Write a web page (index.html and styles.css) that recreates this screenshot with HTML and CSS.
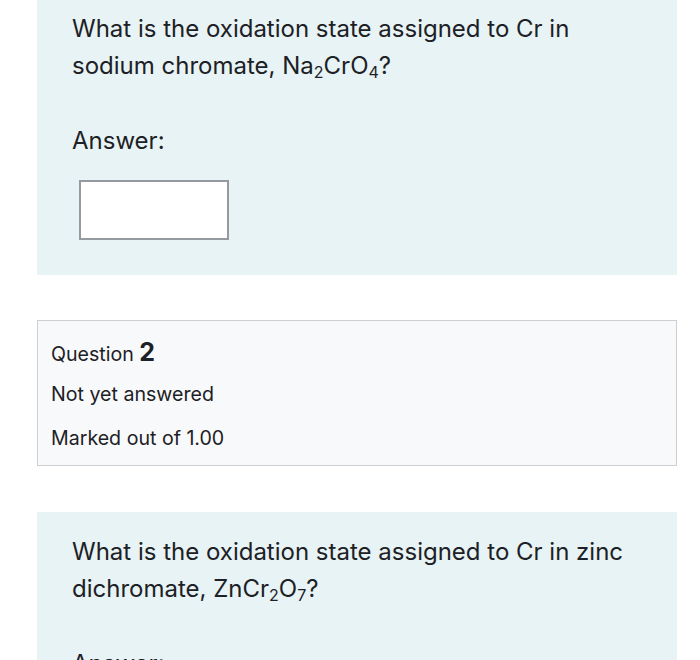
FILE: index.html
```html
<!DOCTYPE html>
<html>
<head>
<meta charset="utf-8">
<link rel="stylesheet" href="styles.css">
</head>
<body>
<div class="page">
  <div class="formulation first">
    <p class="qtext">What is the oxidation state assigned to Cr in sodium chromate, Na<sub>2</sub>CrO<sub>4</sub>?</p>
    <div class="answer-label">Answer:</div>
    <div class="answer-input"></div>
  </div>

  <div class="info">
    <h3 class="qno">Question <span class="num">2</span></h3>
    <div class="state">Not yet answered</div>
    <div class="grade">Marked out of 1.00</div>
  </div>

  <div class="formulation second">
    <p class="qtext">What is the oxidation state assigned to Cr in zinc dichromate, ZnCr<sub>2</sub>O<sub>7</sub>?</p>
    <div class="answer-label">Answer:</div>
    <div class="answer-input"></div>
  </div>
</div>
</body>
</html>
```

FILE: styles.css
```css
html, body {
  margin: 0;
  padding: 0;
  background: #ffffff;
}

body {
  font-family: Inter, "Liberation Sans", Arial, sans-serif;
  color: #1d2125;
  height: 660px;
  overflow: hidden;
}

.page {
  padding-left: 37px;
  width: 640px;
}

.formulation {
  background: #e7f3f5;
  padding: 10px 35px 35px 35px;
  font-size: 24px;
  line-height: 37px;
}

.formulation.second {
  margin-top: 46px;
  padding-top: 21px;
}

.qtext {
  margin: 0;
  width: 565px;
}

.qtext sub {
  font-size: 16px;
  line-height: 0;
  vertical-align: -4px;
}

.answer-label {
  margin-top: 38px;
}

.answer-input {
  margin-top: 21px;
  margin-left: 7px;
  width: 146px;
  height: 56px;
  background: #ffffff;
  border: 2px solid #959aa1;
}

.info {
  margin-top: 45px;
  background: #f8f9fa;
  border: 1px solid #cdd0d3;
  padding: 17px 13px 13px 13px;
  font-size: 19.6px;
  line-height: 28px;
}

.qno {
  margin: 0;
  font-size: 19.6px;
  font-weight: normal;
  line-height: 28px;
}

.num {
  font-size: 25px;
  font-weight: bold;
}

.state {
  margin-top: 12px;
}

.grade {
  margin-top: 16px;
}
```
